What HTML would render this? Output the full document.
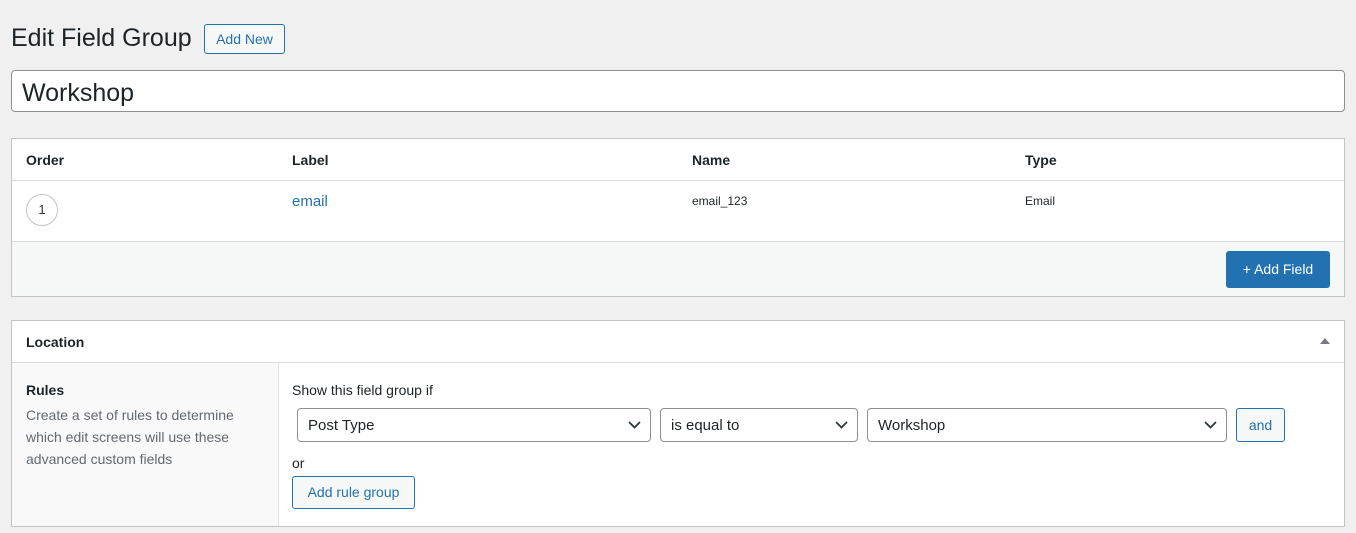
<!DOCTYPE html>
<html><head><style>
*{box-sizing:border-box;margin:0;padding:0}
body{width:1356px;height:533px;background:#f0f0f1;font-family:"Liberation Sans",sans-serif;color:#1d2327;position:relative;overflow:hidden;font-size:14px}
.a{position:absolute}
.btn2{border:1px solid #2271b1;color:#2271b1;background:#f6f7f7;border-radius:3px;text-align:center;font-size:14px}
.sel{border:1px solid #8c8f94;border-radius:4px;background:#fff;font-size:15px;padding-left:10px;line-height:33px}
.sel svg{position:absolute;right:9px;top:12px}
b{font-weight:bold}
</style></head><body>
<div class="a" style="left:11px;top:24px;font-size:25px;color:#1d2327">Edit Field Group</div>
<div class="a btn2" style="left:204px;top:24px;width:81px;height:30px;line-height:28px">Add New</div>
<div class="a" style="left:11px;top:70px;width:1334px;height:42px;border:1px solid #8c8f94;border-radius:4px;background:#fff;font-size:25px;padding-left:10px;line-height:44px">Workshop</div>

<div class="a" style="left:11px;top:138px;width:1334px;height:159px;border:1px solid #c3c4c7;background:#fff">
 <div class="a" style="left:0;top:41px;width:1332px;border-top:1px solid #dcdcde"></div>
 <div class="a" style="left:0;top:102px;width:1332px;height:55px;border-top:1px solid #dcdcde;background:#f6f7f7"></div>
 <b class="a" style="left:14px;top:13px">Order</b>
 <b class="a" style="left:280px;top:13px">Label</b>
 <b class="a" style="left:680px;top:13px">Name</b>
 <b class="a" style="left:1013px;top:13px">Type</b>
 <div class="a" style="left:14px;top:55px;width:32px;height:32px;border:1px solid #c3c4c7;border-radius:50%;text-align:center;line-height:30px;font-size:13px;color:#2c3338">1</div>
 <div class="a" style="left:280px;top:54px;color:#2271b1;font-size:15px">email</div>
 <div class="a" style="left:680px;top:55px;font-size:12px">email_123</div>
 <div class="a" style="left:1013px;top:55px;font-size:12px">Email</div>
 <div class="a" style="left:1214px;top:112px;width:104px;height:37px;background:#2271b1;border-radius:3px;color:#fff;text-align:center;line-height:36px;font-size:14px">+ Add Field</div>
</div>

<div class="a" style="left:11px;top:320px;width:1334px;height:207px;border:1px solid #c3c4c7;background:#fff">
 <b class="a" style="left:14px;top:13px;font-weight:600">Location</b>
 <svg class="a" style="left:1308px;top:16px" width="10" height="8"><path d="M0 7L5 1L10 7Z" fill="#787c82"/></svg>
 <div class="a" style="left:0;top:41px;width:1332px;border-top:1px solid #dcdcde"></div>
 <div class="a" style="left:0;top:42px;width:267px;height:163px;background:#f9f9f9;border-right:1px solid #e1e1e1"></div>
 <b class="a" style="left:14px;top:61px">Rules</b>
 <div class="a" style="left:14px;top:83px;width:240px;color:#646970;line-height:22px">Create a set of rules to determine which edit screens will use these advanced custom fields</div>
 <div class="a" style="left:280px;top:61px">Show this field group if</div>
 <div class="a sel" style="left:285px;top:87px;width:354px;height:34px">Post Type<svg width="13" height="8"><path d="M1 1L6.5 6.5L12 1" stroke="#2c3338" stroke-width="1.7" fill="none"/></svg></div>
 <div class="a sel" style="left:648px;top:87px;width:198px;height:34px">is equal to<svg width="13" height="8"><path d="M1 1L6.5 6.5L12 1" stroke="#2c3338" stroke-width="1.7" fill="none"/></svg></div>
 <div class="a sel" style="left:855px;top:87px;width:360px;height:34px">Workshop<svg width="13" height="8"><path d="M1 1L6.5 6.5L12 1" stroke="#2c3338" stroke-width="1.7" fill="none"/></svg></div>
 <div class="a btn2" style="left:1224px;top:87px;width:49px;height:34px;line-height:32px">and</div>
 <div class="a" style="left:280px;top:134px">or</div>
 <div class="a btn2" style="left:280px;top:155px;width:123px;height:33px;line-height:31px">Add rule group</div>
</div>
</body></html>
